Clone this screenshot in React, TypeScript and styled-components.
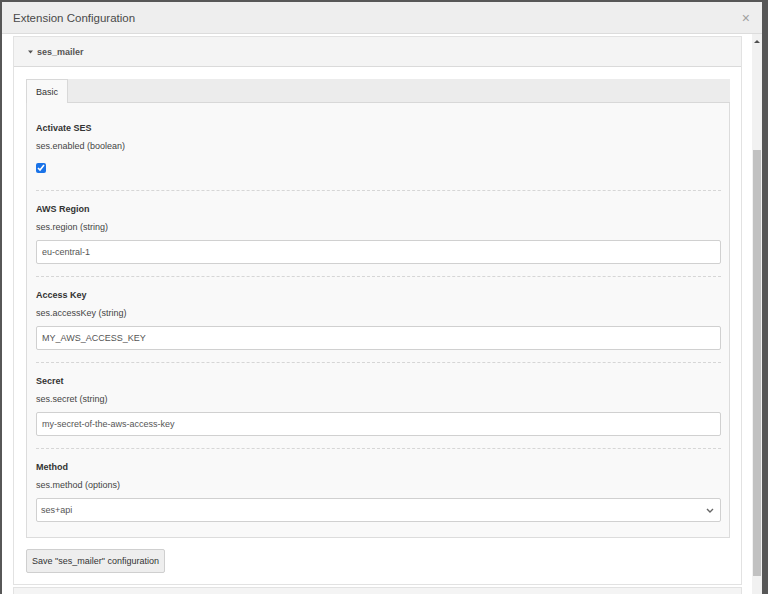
import * as React from 'react';
import styled, { createGlobalStyle } from 'styled-components';

const GlobalStyle = createGlobalStyle`
    html, body {
        margin: 0;
        padding: 0;
        background: #575757;
        font-family: "Liberation Sans", Arial, sans-serif;
    }
    * {
        box-sizing: border-box;
    }
`;

const Page = styled.div`
    height: 594px;
    overflow: hidden;
    padding: 2px 6px 0 2px;
`;

const Dialog = styled.div`
    height: 100%;
    background: #fff;
    display: flex;
    flex-direction: column;
`;

const DialogHeader = styled.div`
    flex: 0 0 32px;
    display: flex;
    align-items: center;
    justify-content: space-between;
    padding: 0 12px 0 11px;
    background: #eee;
    border-bottom: 1px solid #dcdcdc;
    color: #4a4a4a;
    font-size: 11.5px;
`;

const CloseButton = styled.span`
    color: #a0a0a0;
    font-size: 14px;
    line-height: 1;
    cursor: pointer;
`;

const DialogBody = styled.div`
    flex: 1 1 auto;
    display: flex;
    min-height: 0;
`;

const PanelList = styled.div`
    flex: 1 1 auto;
    overflow: hidden;
    display: flex;
    flex-direction: column;
    gap: 2px;
    padding: 2px 10px 0 11px;
`;

const Panel = styled.div`
    flex: 0 0 auto;
    border: 1px solid #e2e2e2;
`;

const PanelHeader = styled.div<{ $tall?: boolean }>`
    height: ${p => (p.$tall ? '40px' : '30px')};
    display: flex;
    align-items: center;
    gap: 4px;
    padding-left: 14px;
    background: #f4f4f4;
    border-bottom: 1px solid #dadada;
    color: #555;
    font-size: 9px;
    font-weight: 700;
`;

const PanelBody = styled.div`
    padding: 12px 11px 11px 12px;
`;

const TabBar = styled.div`
    display: flex;
    height: 24px;
    background: #ececec;
    border-bottom: 1px solid #d8d8d8;
`;

const Tab = styled.div<{ $active?: boolean }>`
    display: flex;
    align-items: center;
    padding: 0 9px;
    margin-bottom: -1px;
    background: ${p => (p.$active ? '#f9f9f9' : 'transparent')};
    border: 1px solid ${p => (p.$active ? '#d8d8d8' : 'transparent')};
    border-bottom: none;
    color: #333;
    font-size: 9px;
`;

const TabContent = styled.div`
    background: #f9f9f9;
    border: 1px solid #dcdcdc;
    border-top: none;
    padding: 7px 8px 3px 9px;
`;

const Field = styled.div`
    padding: 12px 0 12px;
    & + & {
        border-top: 1px dashed #d6d6d6;
    }
`;

const FieldLabel = styled.div`
    color: #333;
    font-size: 9px;
    font-weight: 700;
    line-height: 12px;
    margin-bottom: 6px;
`;

const FieldHint = styled.div`
    color: #444;
    font-size: 9px;
    line-height: 12px;
    margin-bottom: 7px;
`;

const Checkbox = styled.input`
    width: 10px;
    height: 10px;
    margin: 11px 0 5px;
    display: block;
    accent-color: #1a73e8;
`;

const TextInput = styled.input`
    display: block;
    width: 100%;
    height: 24px;
    padding: 0 5px;
    background: #fff;
    border: 1px solid #d0d0d0;
    border-radius: 2px;
    color: #555;
    font-family: "Liberation Sans", Arial, sans-serif;
    font-size: 9px;
    outline: none;
`;

const SelectWrap = styled.div`
    position: relative;
`;

const Select = styled.select`
    display: block;
    width: 100%;
    height: 24px;
    padding: 0 20px 0 4px;
    background: #fff;
    border: 1px solid #d0d0d0;
    border-radius: 2px;
    color: #555;
    font-family: "Liberation Sans", Arial, sans-serif;
    font-size: 9px;
    appearance: none;
    outline: none;
`;

const SelectArrow = styled.svg`
    position: absolute;
    right: 7px;
    top: 10px;
    pointer-events: none;
`;

const SaveButton = styled.button`
    margin-top: 11px;
    height: 24px;
    padding: 0 5px;
    background: #eee;
    border: 1px solid #cfcfcf;
    border-radius: 2px;
    color: #333;
    font-family: "Liberation Sans", Arial, sans-serif;
    font-size: 9px;
    cursor: pointer;
`;

const ScrollTrack = styled.div`
    flex: 0 0 10px;
    background: #f1f1f1;
    display: flex;
    flex-direction: column;
`;

const ScrollArrow = styled.div`
    flex: 0 0 14px;
    display: flex;
    align-items: center;
    justify-content: center;
    &::before {
        content: '';
        border-left: 3px solid transparent;
        border-right: 3px solid transparent;
        border-bottom: 3px solid #505050;
    }
`;

const ScrollGap = styled.div<{ $size: number }>`
    flex: 0 0 ${p => p.$size}px;
`;

const ScrollThumb = styled.div<{ $size: number }>`
    flex: 0 0 ${p => p.$size}px;
    margin: 0 1px;
    background: #c1c1c1;
`;

const Caret = () => (
    <svg width="5" height="4" viewBox="0 0 5 4">
        <path d="M0 0.5h5L2.5 3.5z" fill="#555" />
    </svg>
);

interface FieldDef {
    label: string;
    hint: string;
    kind: 'boolean' | 'string' | 'options';
    value: string;
}

const FIELDS: FieldDef[] = [
    { label: 'Activate SES', hint: 'ses.enabled (boolean)', kind: 'boolean', value: 'true' },
    { label: 'AWS Region', hint: 'ses.region (string)', kind: 'string', value: 'eu-central-1' },
    { label: 'Access Key', hint: 'ses.accessKey (string)', kind: 'string', value: 'MY_AWS_ACCESS_KEY' },
    { label: 'Secret', hint: 'ses.secret (string)', kind: 'string', value: 'my-secret-of-the-aws-access-key' },
    { label: 'Method', hint: 'ses.method (options)', kind: 'options', value: 'ses+api' },
];

const FieldControl: React.FC<{ field: FieldDef }> = ({ field }) => {
    if (field.kind === 'boolean') {
        return <Checkbox type="checkbox" defaultChecked={field.value === 'true'} />;
    }
    if (field.kind === 'options') {
        return (
            <SelectWrap>
                <Select defaultValue={field.value}>
                    <option value="ses+api">ses+api</option>
                    <option value="ses+smtp">ses+smtp</option>
                </Select>
                <SelectArrow width="8" height="5" viewBox="0 0 8 5">
                    <path d="M1 1l3 3 3-3" fill="none" stroke="#666" strokeWidth="1.4" />
                </SelectArrow>
            </SelectWrap>
        );
    }
    return <TextInput type="text" defaultValue={field.value} />;
};

export default function App() {
    return (
        <>
            <GlobalStyle />
            <Page>
                <Dialog>
                    <DialogHeader>
                        <span>Extension Configuration</span>
                        <CloseButton>×</CloseButton>
                    </DialogHeader>
                    <DialogBody>
                        <PanelList>
                            <Panel>
                                <PanelHeader>
                                    <Caret />
                                    <span>ses_mailer</span>
                                </PanelHeader>
                                <PanelBody>
                                    <TabBar>
                                        <Tab $active>Basic</Tab>
                                    </TabBar>
                                    <TabContent>
                                        {FIELDS.map(field => (
                                            <Field key={field.hint}>
                                                <FieldLabel>{field.label}</FieldLabel>
                                                <FieldHint>{field.hint}</FieldHint>
                                                <FieldControl field={field} />
                                            </Field>
                                        ))}
                                    </TabContent>
                                    <SaveButton>Save "ses_mailer" configuration</SaveButton>
                                </PanelBody>
                            </Panel>
                            <Panel>
                                <PanelHeader $tall />
                            </Panel>
                        </PanelList>
                        <ScrollTrack>
                            <ScrollArrow />
                            <ScrollGap $size={102} />
                            <ScrollThumb $size={426} />
                        </ScrollTrack>
                    </DialogBody>
                </Dialog>
            </Page>
        </>
    );
}
